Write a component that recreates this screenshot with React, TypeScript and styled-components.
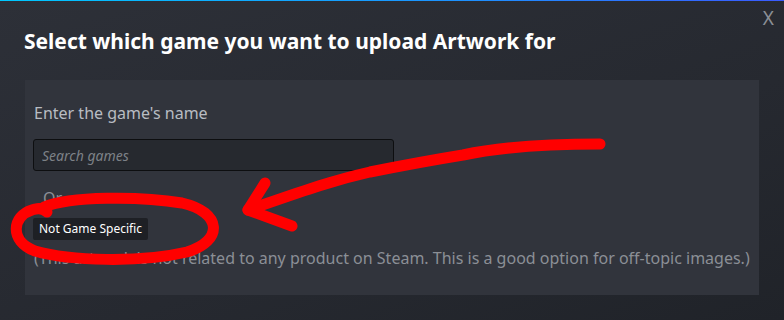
import React from 'react';
import styled, { createGlobalStyle } from 'styled-components';

const GlobalStyle = createGlobalStyle`
  html, body {
    margin: 0;
    padding: 0;
    background: #23262d;
  }
`;

const Dialog = styled.div`
  position: relative;
  width: 784px;
  height: 320px;
  overflow: hidden;
  background: linear-gradient(160deg, #2d3038 0%, #262930 60%, #202329 100%);
  font-family: "Noto Sans", "Open Sans", Arial, sans-serif;
`;

const TopLine = styled.div`
  height: 1px;
  background: linear-gradient(90deg, #00c8ff 0%, #1e90ff 60%, #3a5bff 100%);
`;

const CloseButton = styled.div`
  position: absolute;
  top: 7px;
  right: 10px;
  color: #8b8f96;
  font-size: 19px;
  line-height: 22px;
  font-family: "Noto Sans", Arial, sans-serif;
`;

const Title = styled.h1`
  margin: 0;
  padding: 24px 24px 0 24px;
  height: 79px;
  box-sizing: border-box;
  color: #ffffff;
  font-size: 21px;
  font-weight: 700;
  line-height: 32px;
`;

const Panel = styled.div`
  margin: 0 25px;
  padding: 22px 8px 0 8px;
  height: 215px;
  box-sizing: border-box;
  background: #31343c;
`;

const Label = styled.div`
  color: #b8bcc2;
  font-size: 16px;
  line-height: 22px;
  margin-left: 1px;
`;

const SearchInput = styled.input`
  display: block;
  margin-top: 15px;
  width: 361px;
  height: 32px;
  box-sizing: border-box;
  padding: 0 8px;
  background: #26292f;
  border: 1px solid #0d0e10;
  border-radius: 3px;
  color: #dfe3e6;
  font-family: "Noto Sans", Arial, sans-serif;
  font-size: 14px;
  outline: none;

  &::placeholder {
    color: #7d8187;
    font-style: italic;
  }
`;

const OrText = styled.div`
  margin: 16px 0 0 10px;
  color: #8b8f96;
  font-size: 16px;
  line-height: 22px;
`;

const PlainButton = styled.button`
  display: block;
  margin-top: 9px;
  padding: 0 6px;
  height: 22px;
  border: none;
  border-radius: 2px;
  background: #1e2025;
  color: #ffffff;
  font-family: "Noto Sans", Arial, sans-serif;
  font-size: 12px;
  line-height: 22px;
  cursor: pointer;
`;

const Note = styled.div`
  margin-top: 7px;
  color: #8b8f96;
  font-size: 16px;
  line-height: 22px;
  margin-left: 1px;
  white-space: nowrap;
`;

// red hand-drawn annotation laid over the dialog
const Scribble = styled.svg`
  position: absolute;
  left: 0;
  top: 0;
  pointer-events: none;
`;

const App: React.FC = () => (
  <>
    <GlobalStyle />
    <Dialog>
      <TopLine />
      <CloseButton>X</CloseButton>
      <Title>Select which game you want to upload Artwork for</Title>
      <Panel>
        <Label>Enter the game's name</Label>
        <SearchInput placeholder="Search games" />
        <OrText>Or</OrText>
        <PlainButton>Not Game Specific</PlainButton>
        <Note>
          (This artwork is not related to any product on Steam. This is a good option for off-topic images.)
        </Note>
      </Panel>
      <Scribble width="784" height="320" viewBox="0 0 784 320">
        <g fill="none" stroke="#ff0000" strokeWidth="11" strokeLinecap="round" strokeLinejoin="round">
          <path d="M600 144 C540 144 500 147 463 155 C420 162 390 168 370 172 C330 181 300 192 248 210" />
          <path d="M265 183 L248 210 L292 226" />
          <path d="M44 207 C70 196 140 196 182 203 C222 212 224 241 187 252 C140 263 70 261 35 251 C9 241 12 216 32 210 C40 207 44 209 47 212" />
        </g>
      </Scribble>
    </Dialog>
  </>
);

export default App;
